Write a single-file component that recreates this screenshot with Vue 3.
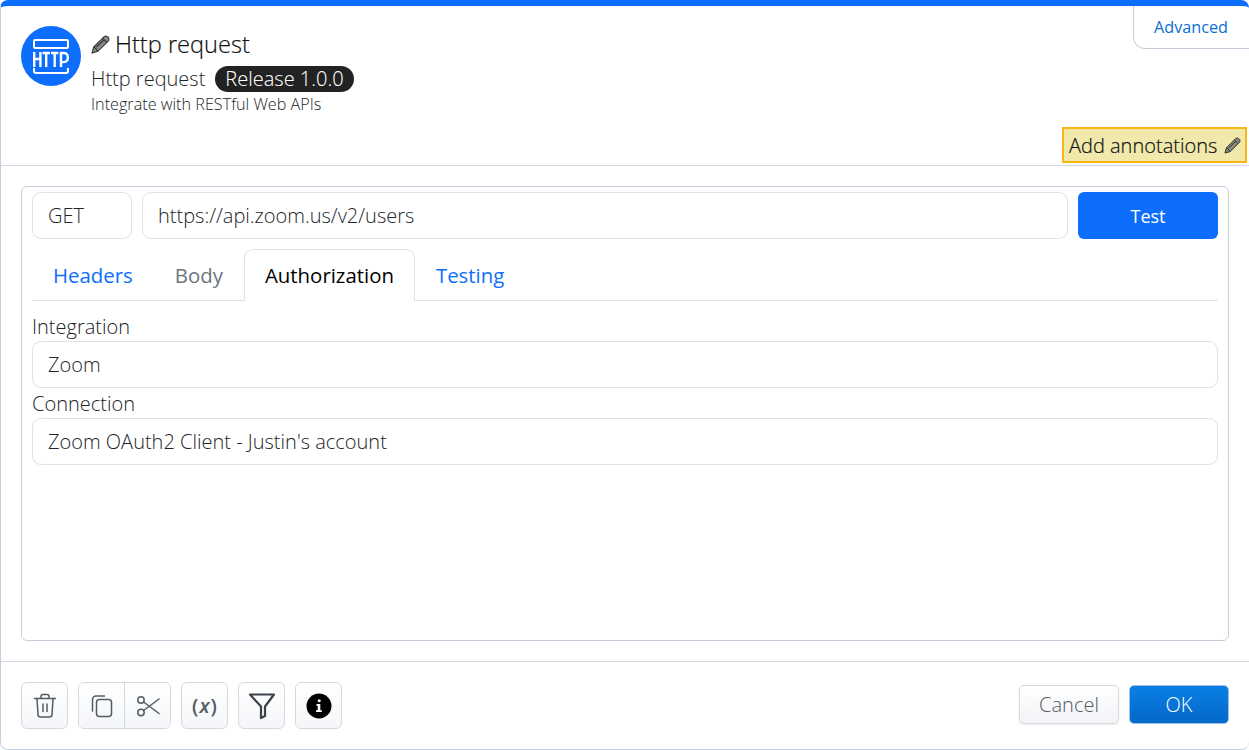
<script setup>
const tabs = [
  { label: 'Headers', cls: 'link' },
  { label: 'Body', cls: 'muted' },
  { label: 'Authorization', cls: 'active' },
  { label: 'Testing', cls: 'link' },
]
const fields = [
  { label: 'Integration', value: 'Zoom' },
  { label: 'Connection', value: "Zoom OAuth2 Client - Justin's account" },
]
const pencil = 'M1 17l1.500-5.500L12.500 1.500q1.500-1 3 0l1 1q1 1.500 0 3l-10 10zM11 3l4 4M3 11.500l3.500 3.500M5 11.500 12.500 4.500'
</script>

<template>
  <div class="frame">
    <header class="head">
      <div class="identity">
        <div class="logo">
          <svg width="60" height="60" viewBox="0 0 60 60">
            <circle cx="30" cy="30" r="30" fill="#0d6efd" />
            <rect x="13" y="14" width="34" height="8" rx="1" fill="none" stroke="#fff" stroke-width="2" />
            <path d="M13 42v3a2 2 0 0 0 2 2h30a2 2 0 0 0 2-2v-3" fill="none" stroke="#fff" stroke-width="2" />
            <path d="M13.200 26v15M19.400 26v15M13.200 33h6.200M21.500 27h7.400M25.200 27V41M30 27h7.400M33.700 27V41M40 41V27h3a3.800 3.800 0 0 1 3.800 3.800v1.500a3.800 3.800 0 0 1-3.800 3.800h-3" fill="none" stroke="#fff" stroke-width="2.400" />
          </svg>
        </div>
        <div class="titles">
          <div class="title">
            <svg class="pen" width="19" height="19" viewBox="0 0 18 18"><path :d="pencil" fill="#8a8a8a" stroke="#2f2f2f" stroke-width="1" /></svg>
            <span>Http request</span>
          </div>
          <div class="subtitle">
            <span>Http request</span>
            <span class="badge">Release 1.0.0</span>
          </div>
          <div class="desc">Integrate with RESTful Web APIs</div>
        </div>
      </div>
      <a class="advanced">Advanced</a>
      <div class="annot">
        <span>Add annotations</span>
        <svg width="17" height="17" viewBox="0 0 18 18"><path :d="pencil" fill="#8a8a7a" stroke="#2f2f2f" stroke-width="1" /></svg>
      </div>
    </header>

    <main class="body">
      <section class="card">
        <div class="request">
          <div class="box method">GET</div>
          <div class="box url">https://api.zoom.us/v2/users</div>
          <button class="test">Test</button>
        </div>
        <nav class="tabs">
          <a v-for="t in tabs" :key="t.label" class="tab" :class="t.cls">{{ t.label }}</a>
        </nav>
        <div class="fields">
          <div v-for="f in fields" :key="f.label" class="field">
            <label>{{ f.label }}</label>
            <div class="box wide">{{ f.value }}</div>
          </div>
        </div>
      </section>
    </main>

    <footer class="foot">
      <div class="tools">
        <button class="tool" aria-label="Delete">
          <svg width="24" height="26" viewBox="0 0 24 26" fill="none" stroke="#555b63" stroke-width="1.500" stroke-linecap="round" stroke-linejoin="round">
            <path d="M1.500 5.500h21M8 5V3.500a2 2 0 0 1 2-2h4a2 2 0 0 1 2 2V5M4 6l1 15.500a2.500 2.500 0 0 0 2.500 2.500h9a2.500 2.500 0 0 0 2.500-2.500L20 6M10 11v7.500M14 11v7.500" />
          </svg>
        </button>
        <div class="group">
          <button class="tool inner" aria-label="Copy">
            <svg width="24" height="24" viewBox="0 0 24 24" fill="none" stroke="#555b63" stroke-width="1.500" stroke-linejoin="round" stroke-linecap="round">
              <rect x="6.500" y="5.500" width="15" height="17" rx="3" />
              <path d="M14.500 2H6a3.500 3.500 0 0 0-3.500 3.500V17" />
            </svg>
          </button>
          <button class="tool inner" aria-label="Cut">
            <svg width="24" height="24" viewBox="0 0 24 24" fill="none" stroke="#555b63" stroke-width="1.500" stroke-linecap="round">
              <circle cx="5" cy="6" r="3.200" />
              <circle cx="5" cy="18.500" r="3.200" />
              <path d="M7.600 8 23 19.500M7.600 16.500 23 5" />
            </svg>
          </button>
        </div>
        <button class="tool var" aria-label="Variables">(<i>x</i>)</button>
        <button class="tool" aria-label="Filter">
          <svg width="28" height="28" viewBox="0 0 28 28" fill="none" stroke="#3d4248" stroke-width="2.200" stroke-linejoin="round">
            <path d="M2 2.500h24L17 14.500V24l-4 2V14.500z" />
          </svg>
        </button>
        <button class="tool" aria-label="Info">
          <svg width="26" height="26" viewBox="0 0 26 26">
            <circle cx="13" cy="13" r="12.500" fill="#000" />
            <circle cx="13.200" cy="7.800" r="1.500" fill="#fff" />
            <path d="M10.500 11h3.800v6.200h1.500V19H10v-1.800h1.700v-4.400h-1.200z" fill="#fff" />
          </svg>
        </button>
      </div>
      <div class="actions">
        <button class="cancel">Cancel</button>
        <button class="ok">OK</button>
      </div>
    </footer>
  </div>
</template>

<style>
html, body { margin: 0; background: #fff; }
</style>

<style scoped>
.frame {
  box-sizing: border-box;
  width: 1249px;
  height: 750px;
  display: flex;
  flex-direction: column;
  background: #fff;
  border: 1px solid #c7cfdf;
  border-top: 6px solid #0d6efd;
  border-right: 0;
  border-radius: 8px;
  font-family: "Open Sans", sans-serif;
  font-weight: 300;
  color: #212529;
  overflow: hidden;
}
button { font-family: inherit; font-weight: inherit; }
.head {
  position: relative;
  height: 159px;
  flex: none;
  border-bottom: 1px solid #d3d7df;
}
.identity { display: flex; gap: 10px; padding: 20px 0 0 20px; }
.logo { height: 60px; }
.titles { display: flex; flex-direction: column; }
.title {
  display: flex; align-items: center; gap: 5px;
  font-size: 23.600px; line-height: 36px; color: #212529;
}
.title span { color: #111; -webkit-text-stroke: 0.2px #111; }
.subtitle {
  display: flex; align-items: center; gap: 10px;
  font-size: 20px; line-height: 26px; margin-top: 4px;
}
.badge {
  background: #222; color: #fff; border-radius: 13px;
  padding: 0 10px; height: 26px;
  -webkit-text-stroke: 0.1px #fff;
}
.desc { font-size: 16.200px; line-height: 22px; margin-top: 1px; }
.advanced {
  position: absolute; top: 0; right: 0;
  box-sizing: border-box; width: 116px; height: 43px;
  display: flex; align-items: center; justify-content: center;
  color: #0a6ed1; font-size: 16.200px; font-weight: 400;
  border: 1px solid #c7cfdf; border-top: 0; border-right: 0;
  border-bottom-left-radius: 12px;
  padding-right: 1px;
}
.annot {
  position: absolute; right: 2px; bottom: 2px;
  box-sizing: border-box; width: 185px; height: 36px;
  display: flex; align-items: center; justify-content: space-between;
  padding: 0 4px 0 5px;
  border: 2px solid #fbb615; background: #f0e9ab;
  font-size: 20px; color: #111;
}
.annot span { -webkit-text-stroke: 0.2px #111; }
.body { flex: 1; padding: 20px; display: flex; min-height: 0; }
.card {
  flex: 1; box-sizing: border-box;
  border: 1px solid #c7cfdf; border-radius: 6px;
  padding: 5px 10px;
}
.request { display: flex; gap: 10px; }
.box {
  box-sizing: border-box; height: 47px;
  display: flex; align-items: center;
  border: 1px solid #dee2e6; border-radius: 9px;
  font-size: 20px; padding: 0 15px; color: #212529;
}
.method { width: 100px; }
.url { flex: 1; }
.test {
  width: 140px; height: 47px; border: 0; border-radius: 6px;
  background: #0d6efd; color: #fff; font-size: 18px; font-weight: 400;
}
.tabs {
  display: flex; margin-top: 10px; height: 52px; box-sizing: border-box;
  border-bottom: 1px solid #dee2e6;
}
.tab {
  box-sizing: border-box; height: 52px; padding: 0 20px;
  display: flex; align-items: center;
  font-size: 20.400px; font-weight: 400;
  border: 1px solid transparent; border-radius: 9px 9px 0 0;
}
.tab.link { color: #0d6efd; }
.tab.muted { color: #6c757d; }
.tab.active { color: #000; border-color: #dee2e6 #dee2e6 #fff; background: #fff; }
.fields { display: flex; flex-direction: column; margin-top: 12px; gap: 2px; }
.field label { display: block; font-size: 20px; line-height: 27px; margin-bottom: 1px; }
.wide { width: 100%; }
.foot {
  flex: none; box-sizing: border-box; height: 88px;
  border-top: 1px solid #d3d7df;
  display: flex; align-items: flex-start; justify-content: space-between;
  padding: 20px 20px 0;
}
.tools { display: flex; gap: 10px; }
.group { display: flex; border: 1px solid #d5d9df; border-radius: 6px; overflow: hidden; }
.tool {
  box-sizing: border-box; width: 47px; height: 47px; padding: 0;
  display: flex; align-items: center; justify-content: center;
  border: 1px solid #d5d9df; border-radius: 6px;
  background: linear-gradient(#fff, #f4f6f9);
}
.tool.inner { border: 0; border-radius: 0; height: 45px; width: 45px; }
.tool.inner + .tool.inner { border-left: 1px solid #d5d9df; width: 46px; }
.var { font-size: 20px; font-weight: 600; color: #555b63; }
.var i { padding: 0 1px; }
.actions { display: flex; gap: 10px; margin-top: 3px; }
.cancel, .ok {
  box-sizing: border-box; width: 100px; height: 39px;
  border-radius: 5px; font-size: 20px; padding: 0;
}
.cancel {
  border: 1px solid #d5d9df; color: #555b63;
  background: linear-gradient(#fff, #f1f3f6);
  box-shadow: 0 1px 2px rgba(0,0,0,.08);
}
.ok {
  border: 1px solid #9cc3e8; color: #fff;
  background: linear-gradient(#0a7ee6, #0569c8);
}
</style>
